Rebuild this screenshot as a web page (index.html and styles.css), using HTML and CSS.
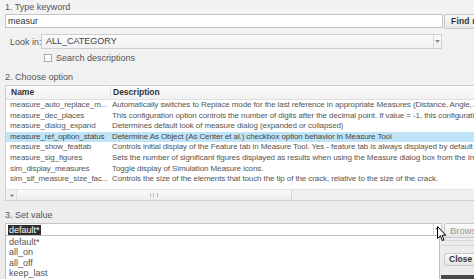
FILE: index.html
```html
<!DOCTYPE html>
<html>
<head>
<meta charset="utf-8">
<link rel="stylesheet" href="styles.css">
</head>
<body>
<div class="dlg">
  <div class="label l1">1. Type keyword</div>
  <div class="line">
    <div class="input">measur</div>
    <div class="btn find">Find now</div>
  </div>
  <div class="line lookin">
    <span class="lk">Look in:</span>
    <div class="combo"><span class="ctext">ALL_CATEGORY</span><span class="carrow"><svg width="5" height="3" viewBox="0 0 5 3"><path d="M0 0h5L2.5 3z" fill="#888"/></svg></span></div>
  </div>
  <div class="check"><span class="box"></span>Search descriptions</div>
  <div class="label l2">2. Choose option</div>
  <div class="table">
    <div class="thead"><span class="c1">Name</span><span class="c2">Description</span></div>
    <div class="tbody">
      <div class="tr"><span class="c1">measure_auto_replace_m...</span><span class="c2">Automatically switches to Replace mode for the last reference in appropriate Measures (Distance, Angle, Area)</span></div>
      <div class="tr"><span class="c1">measure_dec_places</span><span class="c2">This configuration option controls the number of digits after the decimal point. If value = -1, this configuration</span></div>
      <div class="tr"><span class="c1">measure_dialog_expand</span><span class="c2">Determines default look of measure dialog (expanded or collapsed)</span></div>
      <div class="tr sel"><span class="c1">measure_ref_option_status</span><span class="c2">Determine As Object (As Center et al.) checkbox option behavior in Measure Tool</span></div>
      <div class="tr"><span class="c1">measure_show_feattab</span><span class="c2">Controls initial display of the Feature tab in Measure Tool. Yes - feature tab is always displayed by default</span></div>
      <div class="tr"><span class="c1">measure_sig_figures</span><span class="c2">Sets the number of significant figures displayed as results when using the Measure dialog box from the Info</span></div>
      <div class="tr"><span class="c1">sim_display_measures</span><span class="c2">Toggle display of Simulation Measure icons.</span></div>
      <div class="tr"><span class="c1">sim_sif_measure_size_fac...</span><span class="c2">Controls the size of the elements that touch the tip of the crack, relative to the size of the crack.</span></div>
    </div>
    <div class="hscroll">
      <span class="sarrow">&#9666;</span>
      <span class="thumb"><span class="grip"></span></span>
      <span class="track"></span>
    </div>
  </div>
  <div class="label l3">3. Set value</div>
  <div class="line setrow">
    <div class="combo vcombo"><span class="ctext"><span class="hl">default*</span></span><span class="carrow"><svg width="5" height="3" viewBox="0 0 5 3"><path d="M0 0h5L2.5 3z" fill="#888"/></svg></span></div>
    <div class="btn browse">Browse...</div>
  </div>
  <div class="side">
    <div class="sep"></div>
    <div class="btn close">Close</div>
    <div class="dark"></div>
  </div>
  <div class="dropdown">
    <div class="opt">default*</div>
    <div class="opt">all_on</div>
    <div class="opt">all_off</div>
    <div class="opt">keep_last</div>
  </div>
  <svg class="cursor" width="10" height="16" viewBox="0 0 10 16"><path d="M0.5 0.5V12.5L3.3 9.8L5.3 14.5L7 13.8L5 9.2H8.8Z" fill="#fff" stroke="#000" stroke-width="1"/></svg>
</div>
</body>
</html>
```
FILE: styles.css
```css
html, body {
  margin: 0;
  padding: 0;
  width: 474px;
  height: 279px;
  overflow: hidden;
  background: #ededed;
}
.dlg {
  position: relative;
  width: 474px;
  height: 279px;
  overflow: hidden;
  font-family: "Liberation Sans", Arial, sans-serif;
  font-size: 9px;
  color: #444;
  background: linear-gradient(#f3f3f3, #ebebeb);
}
.label {
  padding-left: 5px;
  height: 11px;
  line-height: 11px;
  color: #555;
}
.l1 { padding-top: 2px; height: 12px; }
.line {
  display: flex;
  align-items: flex-start;
  white-space: nowrap;
}
.input {
  flex: none;
  margin-left: 5px;
  width: 434px;
  height: 12px;
  line-height: 12px;
  padding-left: 2px;
  background: #fff;
  border: 1px solid #c4c4c4;
  color: #333;
}
.btn {
  box-sizing: border-box;
  height: 15px;
  line-height: 13px;
  padding-left: 5px;
  border: 1px solid #c8c8c8;
  border-radius: 2px;
  background: linear-gradient(#fafafa, #e6e6e6);
  font-family: "Liberation Sans", Arial, sans-serif;
  font-weight: bold;
  font-size: 8.5px;
  color: #333;
  flex: none;
  overflow: hidden;
  white-space: nowrap;
}
.find {
  margin-left: 1px;
  width: 50px;
  padding-left: 6px;
  letter-spacing: 0.2px;
}
.lookin {
  margin-top: 5px;
  align-items: center;
}
.lk {
  margin-left: 10px;
  width: 31px;
  color: #555;
}
.combo {
  flex: none;
  display: flex;
  width: 399px;
  height: 13px;
  border: 1px solid #cfcfcf;
  background: linear-gradient(#fbfbfb, #f0f0f0);
}
.ctext {
  flex: 1;
  padding-left: 4px;
  line-height: 13px;
  color: #444;
}
.carrow {
  width: 7px;
  border-left: 1px solid #d8d8d8;
  display: flex;
  align-items: center;
  justify-content: center;
}
.check {
  display: flex;
  align-items: center;
  margin-top: 4px;
  margin-left: 44px;
  height: 10px;
  color: #555;
}
.box {
  width: 6px;
  height: 6px;
  border: 1px solid #a8a8a8;
  background: #fff;
  margin-right: 4px;
}
.l2 {
  margin-top: 9px;
  padding-top: 0;
}
.table {
  margin-top: 2px;
  margin-left: 5px;
  width: 480px;
  border-top: 1px solid #cfcfcf;
  border-left: 1px solid #cfcfcf;
  border-bottom: 1px solid #cfcfcf;
  background: #fff;
  white-space: nowrap;
  font-size: 8px;
}
.thead {
  display: flex;
  height: 13px;
  line-height: 13px;
  background: linear-gradient(#fcfcfc, #f1f1f1);
  border-bottom: 1px solid #e0e0e0;
  font-weight: bold;
  color: #333;
  font-size: 8.5px;
}
.c1 {
  width: 100px;
  padding-left: 4px;
  flex: none;
  overflow: hidden;
}
.c2 {
  padding-left: 2px;
  overflow: hidden;
}
.thead .c1 { border-right: 1px solid #e4e4e4; padding-left: 5px; width: 99px; }
.tbody {
  padding-bottom: 4px;
}
.tr {
  display: flex;
  height: 10.6px;
  line-height: 10.6px;
  color: #555;
  letter-spacing: -0.1px;
}
.tr.sel {
  background: #bfe4f8;
  color: #444;
}
.hscroll {
  display: flex;
  height: 10px;
  background: #f0f0f0;
  border-top: 1px solid #e2e2e2;
}
.sarrow {
  width: 10px;
  font-size: 6px;
  line-height: 10px;
  text-align: center;
  color: #777;
  border-right: 1px solid #ddd;
}
.thumb {
  width: 274px;
  background: linear-gradient(#fbfbfb, #ececec);
  border-right: 1px solid #d4d4d4;
  display: flex;
  justify-content: center;
  align-items: center;
}
.grip {
  width: 6px;
  height: 4px;
  border-left: 1px solid #bbb;
  border-right: 1px solid #bbb;
  background: linear-gradient(90deg, transparent 2px, #bbb 2px, #bbb 3px, transparent 3px);
}
.track { flex: 1; }
.l3 {
  margin-top: 9px;
}
.setrow {
  margin-top: 2px;
}
.vcombo {
  margin-left: 5px;
  width: 435px;
  height: 12px;
  background: #fff;
  border-color: #c4c4c4;
}
.vcombo .ctext { padding-left: 2px; line-height: 12px; }
.hl {
  background: #2e2e2e;
  color: #fff;
  padding: 0 1px;
}
.browse {
  margin-left: 2px;
  width: 50px;
  color: #999;
  font-weight: normal;
  font-size: 9.5px;
}
.side {
  position: absolute;
  left: 441px;
  top: 240px;
  width: 40px;
}
.sep {
  height: 4px;
  border-top: 1px solid #d8d8d8;
  border-bottom: 1px solid #d8d8d8;
  margin-bottom: 7px;
}
.close {
  margin-left: 3px;
  width: 50px;
  height: 13px;
  line-height: 11px;
  padding-left: 4px;
}
.dark {
  margin-top: 9px;
  height: 10px;
  background: #4a4a4a;
}
.dropdown {
  position: absolute;
  left: 5px;
  top: 235px;
  width: 433px;
  height: 50px;
  background: #fff;
  border: 1px solid #bdbdbd;
  padding-top: 1px;
}
.opt {
  height: 10.4px;
  line-height: 10.4px;
  padding-left: 3px;
  color: #555;
}
.cursor {
  position: absolute;
  left: 437px;
  top: 226px;
}
```
